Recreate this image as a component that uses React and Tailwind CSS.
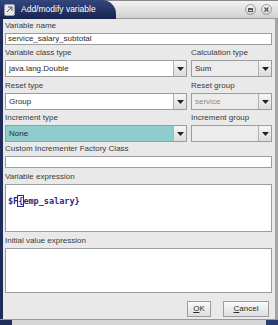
import React from 'react';

const font = { fontFamily: '"Liberation Sans", Arial, sans-serif' };

const Label = ({ children, className = '' }) => (
    <div className={`h-[12px] text-[8px] leading-[12px] text-[#3a3a3a] whitespace-nowrap ${className}`}>{children}</div>
);

const Arrow = () => (
    <div className="w-[13px] h-full border-l border-[#b0b0b0] bg-gradient-to-b from-[#f6f6f6] to-[#dcdcdc] flex items-center justify-center">
        <svg width="7" height="4" viewBox="0 0 7 4"><path d="M0 0h7L3.5 4z" fill="#222" /></svg>
    </div>
);

const Combo = ({ value, bg = 'bg-white', text = 'text-[#2a2a2a]', className = '' }) => (
    <div className={`h-[17px] flex border border-[#9c9c9c] ${className}`}>
        <div className={`flex-1 ${bg} ${text} text-[8px] leading-[15px] pl-[3px] whitespace-nowrap`}>{value}</div>
        <Arrow />
    </div>
);

const App = () => {
    return (
        <div className="w-[278px] h-[325px] flex flex-col bg-[#e9e9e9] overflow-hidden" style={font}>
            {/* Title bar */}
            <div className="h-[19px] flex shrink-0 bg-gradient-to-b from-[#f2f2f2] to-[#d2d2d2] border-t border-[#8a8a8a] border-b border-b-[#9a9a9a]">
                <div className="w-[116px] -mt-px h-[19px] bg-gradient-to-b from-[#33477f] to-[#17244f] rounded-tr-[14px] flex items-center gap-[6px] pl-[4px]">
                    <div className="w-[11px] h-[12px] bg-[#e8e8e8] rounded-[2px] border border-[#9aa0b4] flex items-center justify-center">
                        <svg width="7" height="7" viewBox="0 0 7 7"><path d="M1 6L6 1M2 1h4v4" stroke="#555" strokeWidth="1" fill="none" /></svg>
                    </div>
                    <span className="text-[8.5px] text-white leading-none whitespace-nowrap">Add/modify variable</span>
                </div>
                <div className="flex-1 flex items-center justify-end gap-[5px] pr-[6px]">
                    <div className="w-[11px] h-[11px] rounded-full bg-gradient-to-b from-[#f4f4f4] to-[#cfcfcf] border border-[#9a9a9a] flex items-center justify-center">
                        <div className="w-[5px] h-[4px] border border-[#555] border-t-2" />
                    </div>
                    <div className="w-[11px] h-[11px] rounded-full bg-gradient-to-b from-[#f4f4f4] to-[#cfcfcf] border border-[#9a9a9a] flex items-center justify-center">
                        <svg width="5" height="5" viewBox="0 0 5 5"><path d="M0.5 0.5l4 4M4.5 0.5l-4 4" stroke="#555" strokeWidth="1.2" /></svg>
                    </div>
                </div>
            </div>

            {/* Body */}
            <div className="flex-1 flex flex-col border-l-[3px] border-[#1f2c5a] border-r-[3px] border-r-[#a5a5a5] pl-[2px] pr-[3px] pt-[1px]">
                <Label>Variable name</Label>
                <div className="mt-[1px] h-[12px] bg-white border border-[#9c9c9c] text-[8px] leading-[10px] pl-[2px] text-[#2a2a2a]">service_salary_subtotal</div>

                <div className="flex gap-[4px] mt-[2px]">
                    <div className="flex-1 flex flex-col">
                        <Label>Variable class type</Label>
                        <Combo value="java.lang.Double" className="mt-[1px]" />
                    </div>
                    <div className="w-[81px] flex flex-col">
                        <Label>Calculation type</Label>
                        <Combo value="Sum" bg="bg-[#ececec]" className="mt-[1px]" />
                    </div>
                </div>

                <div className="flex gap-[4px] mt-[3px]">
                    <div className="flex-1 flex flex-col">
                        <Label>Reset type</Label>
                        <Combo value="Group" className="mt-[1px]" />
                    </div>
                    <div className="w-[81px] flex flex-col">
                        <Label>Reset group</Label>
                        <Combo value="service" bg="bg-[#ececec]" text="text-[#8a8a8a]" className="mt-[1px]" />
                    </div>
                </div>

                <div className="flex gap-[4px] mt-[2px]">
                    <div className="flex-1 flex flex-col">
                        <Label>Increment type</Label>
                        <Combo value="None" bg="bg-[#8fcccc]" className="mt-[1px]" />
                    </div>
                    <div className="w-[81px] flex flex-col">
                        <Label>Increment group</Label>
                        <Combo value="" bg="bg-[#ececec]" className="mt-[1px]" />
                    </div>
                </div>

                <Label className="mt-[1px]">Custom Incrementer Factory Class</Label>
                <div className="mt-[1px] h-[12px] bg-white border border-[#9c9c9c]" />

                <Label className="mt-[3px]">Variable expression</Label>
                <div className="mt-[1px] h-[48px] bg-white border border-[#9c9c9c] pl-[2px] pt-[2px]">
                    <span className="text-[8.5px] font-bold text-[#1f2a8c] leading-none" style={{ fontFamily: '"DejaVu Sans Mono", "Liberation Mono", monospace' }}>
                        $F<span className="outline outline-1 outline-[#1f2a8c]">{'{'}</span>emp_salary{'}'}
                    </span>
                </div>

                <Label className="mt-[3px]">Initial value expression</Label>
                <div className="mt-[1px] h-[45px] bg-white border border-[#9c9c9c]" />

                <div className="flex justify-end gap-[12px] mt-[8px] pr-[3px]">
                    <button className="w-[24px] h-[16px] border border-[#9c9c9c] bg-gradient-to-b from-[#fafafa] to-[#dedede] text-[8px] text-[#2a2a2a]"><span className="underline">O</span>K</button>
                    <button className="w-[46px] h-[16px] border border-[#9c9c9c] bg-gradient-to-b from-[#fafafa] to-[#dedede] text-[8px] text-[#2a2a2a]"><span className="underline">C</span>ancel</button>
                </div>
            </div>

            {/* Bottom frame */}
            <div className="h-[6px] shrink-0 flex border-t border-[#9a9a9a] bg-[#d6d6d6]">
                <div className="w-[12px] bg-[#1f2c5a]" />
                <div className="flex-1" />
                <div className="w-[12px] bg-[#2a3d72]" />
            </div>
        </div>
    );
};

export default App;
